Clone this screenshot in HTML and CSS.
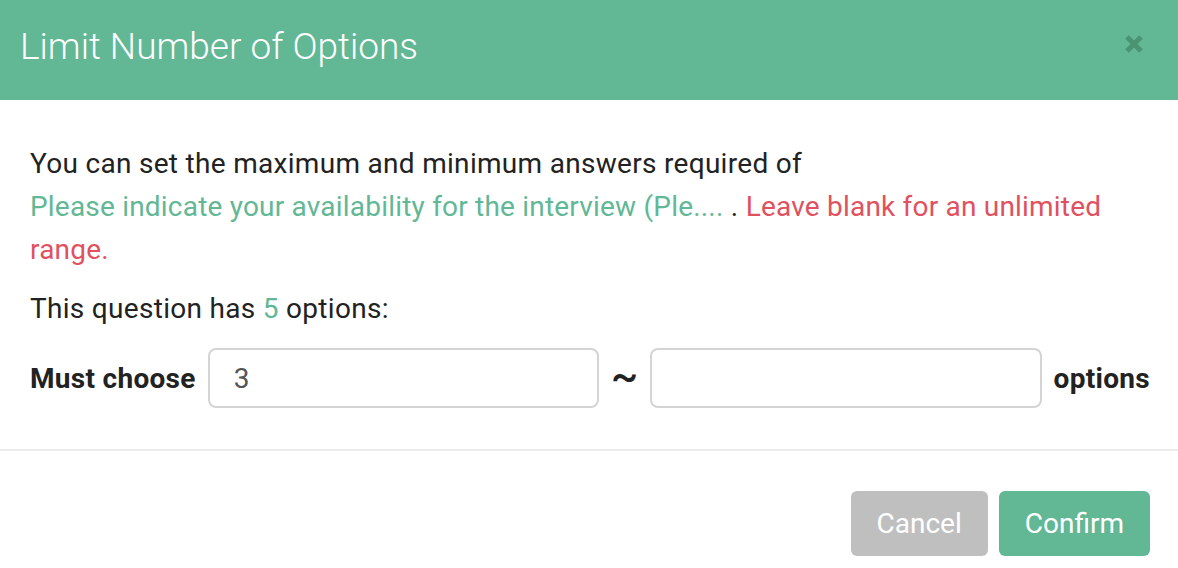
FILE: index.html
```html
<!DOCTYPE html>
<html lang="en">
<head>
<meta charset="utf-8">
<title>Limit Number of Options</title>
<link rel="stylesheet" href="styles.css">
</head>
<body>
<div class="modal">
  <div class="modal-header">
    <h1 class="modal-title">Limit Number of Options</h1>
    <button class="close" type="button" aria-label="Close">
      <svg width="20" height="20" viewBox="0 0 20 20"><path d="M3 3 L17 17 M17 3 L3 17" stroke="#4a9373" stroke-width="5" stroke-linecap="butt"/></svg>
    </button>
  </div>
  <div class="modal-body">
    <p class="intro">You can set the maximum and minimum answers required of<br><span class="q-name">Please indicate your availability for the interview (Ple....</span> . <span class="warn">Leave blank for an unlimited range.</span></p>
    <p class="count">This question has <span class="num">5</span> options:</p>
    <div class="range-row">
      <label class="lbl">Must choose</label>
      <input class="field" type="text" value="3">
      <span class="tilde">~</span>
      <input class="field" type="text" value="">
      <span class="lbl">options</span>
    </div>
  </div>
  <div class="modal-footer">
    <button class="btn btn-cancel" type="button">Cancel</button>
    <button class="btn btn-confirm" type="button">Confirm</button>
  </div>
</div>
</body>
</html>
```

FILE: styles.css
```css
* { box-sizing: border-box; }
html, body { margin: 0; padding: 0; background: #fff; }
body { font-family: Roboto, "Liberation Sans", sans-serif; color: #222; }

.modal { width: 1178px; }

.modal-header {
  height: 100px;
  background: #62b795;
  display: flex;
  align-items: flex-start;
  justify-content: space-between;
  padding: 24px 28px 0 20px;
}
.modal-title {
  margin: 0;
  font-size: 37px;
  font-weight: 300;
  line-height: 45px;
  color: #fff;
}
.close {
  border: 0;
  background: none;
  padding: 0;
  margin-top: 10px;
  margin-right: 6px;
  width: 20px;
  height: 20px;
  cursor: pointer;
}
.close svg { display: block; }

.modal-body {
  padding: 42px 28px 41px 30px;
  border-bottom: 2px solid #ececec;
  font-size: 28px;
  line-height: 43px;
  letter-spacing: 0.3px;
}
.modal-body p { margin: 0; }
.count { margin-top: 16px !important; }
.q-name, .num { color: #62b795; }
.q-name, .warn { letter-spacing: 0.2px; }
.warn { color: #e0515f; }

.range-row {
  display: flex;
  align-items: center;
  gap: 12px;
  margin-top: 18px;
}
.lbl { font-weight: 700; white-space: nowrap; }
.field {
  flex: 1;
  min-width: 0;
  height: 60px;
  border: 2px solid #d4d4d4;
  border-radius: 8px;
  padding: 0 24px;
  font: 28px Roboto, "Liberation Sans", sans-serif;
  color: #555;
  outline: none;
}
.tilde {
  font-size: 41px;
  line-height: 0;
  font-weight: 500;
  position: relative;
  top: -2px;
}

.modal-footer {
  display: flex;
  justify-content: flex-end;
  gap: 11px;
  padding: 40px 28px 20px;
}
.btn {
  height: 65px;
  border: 0;
  border-radius: 6px;
  padding: 0 26px;
  font: 28px Roboto, "Liberation Sans", sans-serif;
  color: #fff;
  cursor: pointer;
}
.btn-cancel { background: #bfbfbf; }
.btn-confirm { background: #62b795; }
```
